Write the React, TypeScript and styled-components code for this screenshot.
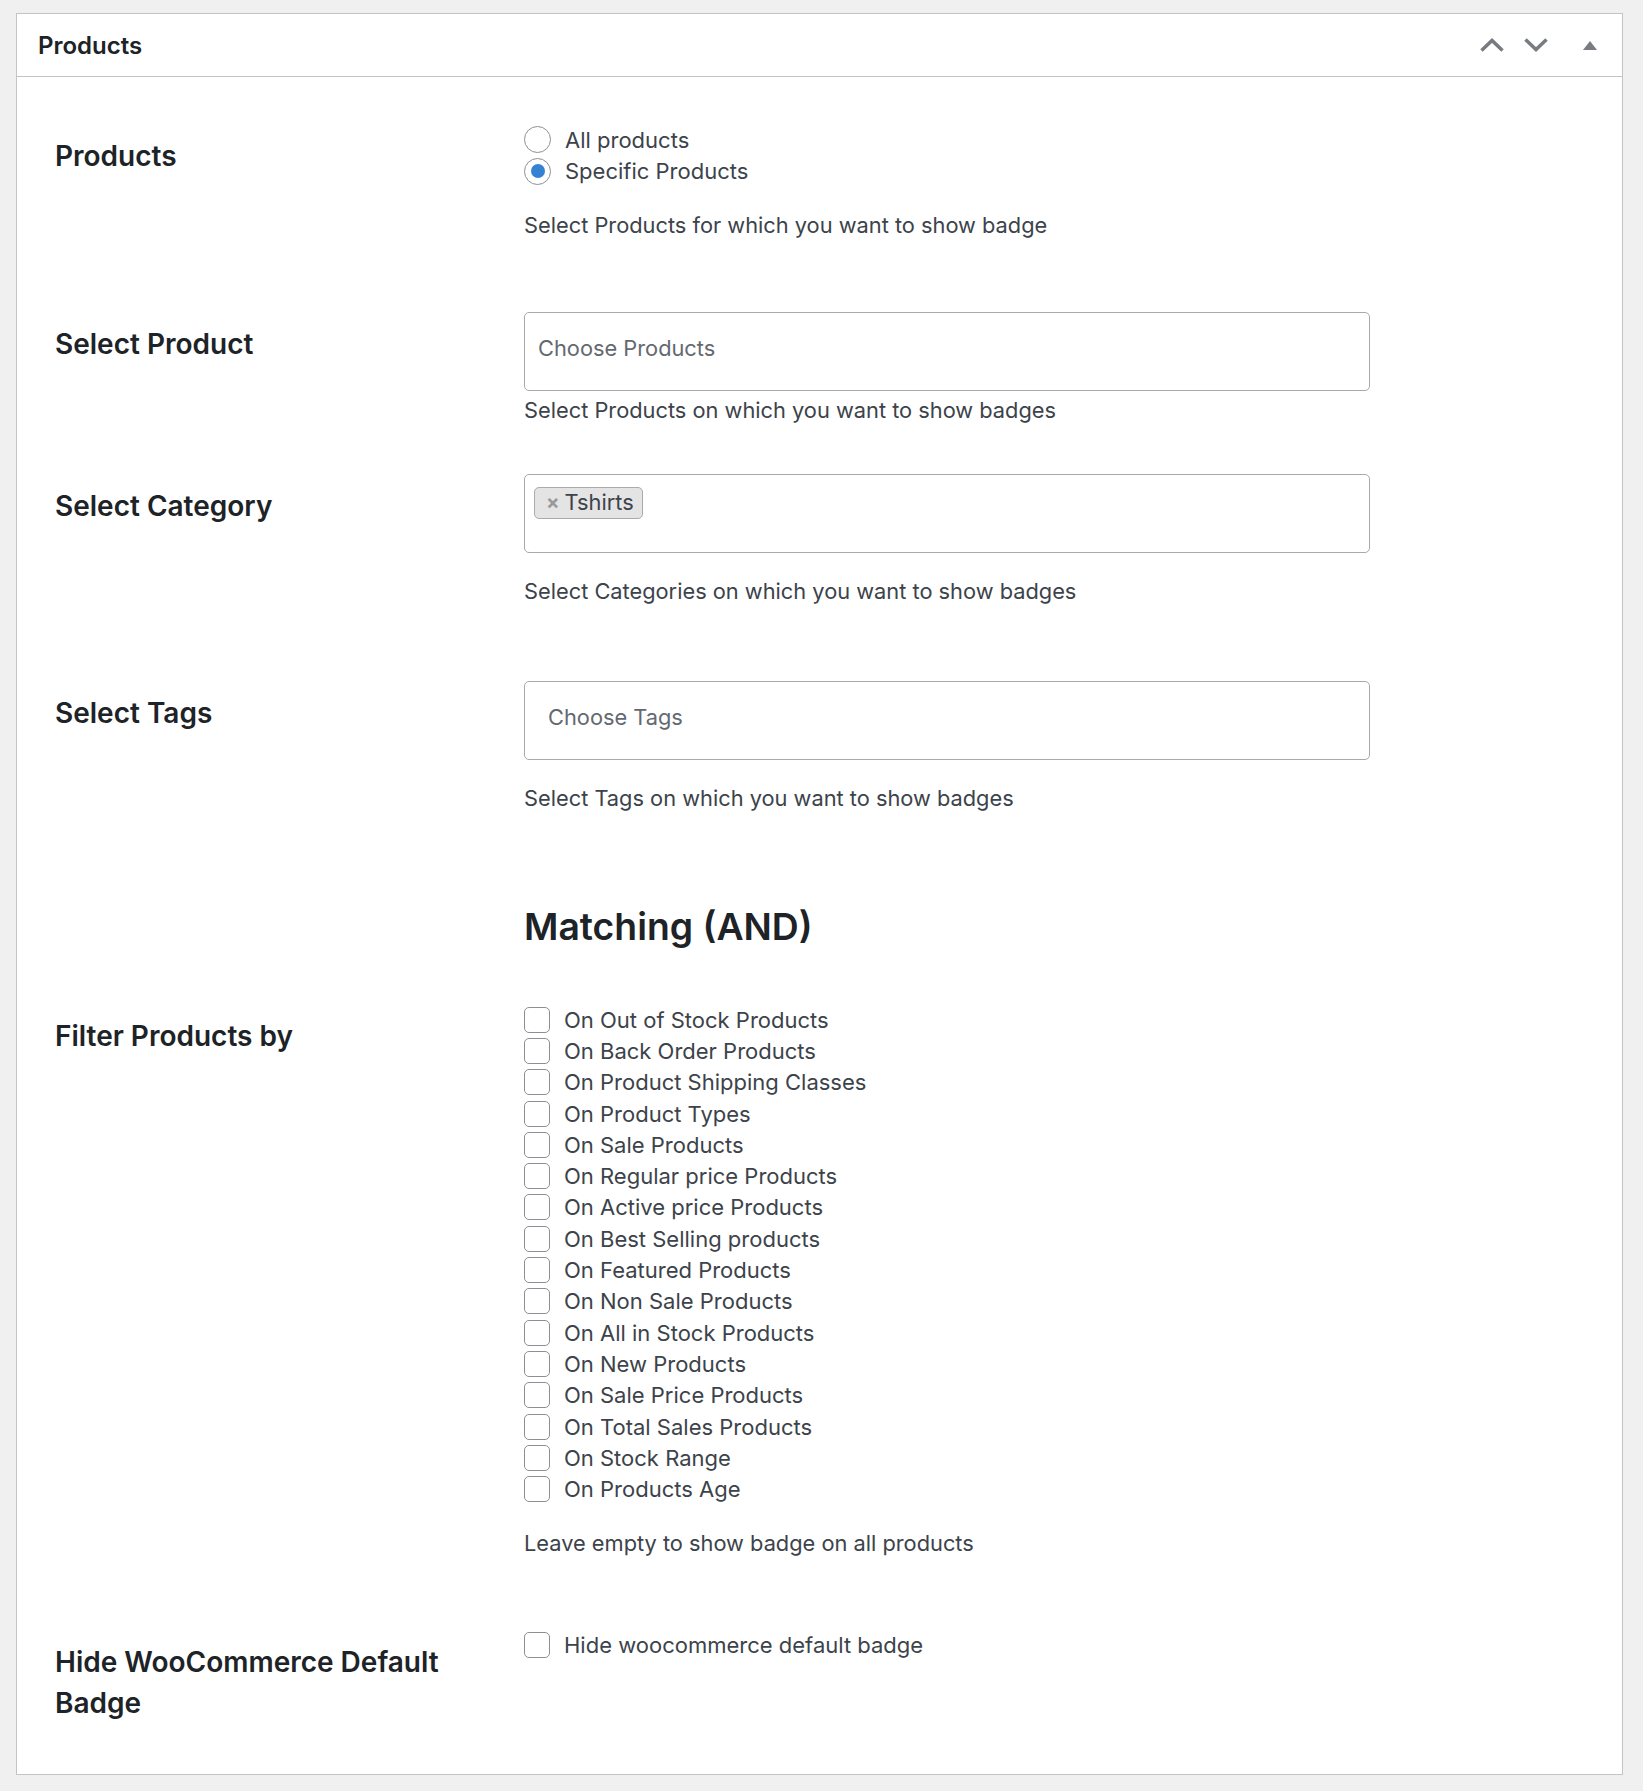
import styled, { createGlobalStyle } from "styled-components";

const GlobalStyle = createGlobalStyle`
  html, body {
    margin: 0;
    padding: 0;
    background: #f0f0f1;
  }
  body {
    font-family: Inter, "Noto Sans", sans-serif;
    color: #3c434a;
  }
`;

const Page = styled.div`
  padding: 13px 20px 17px 16px;
`;

const Panel = styled.div`
  background: #fff;
  border: 1px solid #c3c4c7;
`;

const PanelHeader = styled.div`
  height: 62px;
  display: flex;
  align-items: center;
  padding: 0 10px 0 21px;
  border-bottom: 1px solid #c3c4c7;
`;

const PanelTitle = styled.h2`
  flex: 1;
  margin: 0;
  font-size: 24px;
  font-weight: 600;
  color: #1d2327;
`;

const HeaderButton = styled.button<{ $gapBefore?: number }>`
  width: 44px;
  height: 44px;
  margin-left: ${(p) => p.$gapBefore ?? 0}px;
  padding: 0;
  border: 0;
  background: none;
  display: flex;
  align-items: center;
  justify-content: center;
  cursor: pointer;
`;

const PanelBody = styled.div`
  padding: 23px 0 14px 38px;
`;

const Row = styled.div`
  display: grid;
  grid-template-columns: 469px 1fr;
`;

const Label = styled.div`
  padding: 36px 40px 36px 0;
  font-size: 28px;
  line-height: 41px;
  font-weight: 600;
  color: #1d2327;
`;

const Field = styled.div`
  padding: 24px 0;
`;

const Help = styled.p<{ $top?: number; $bottom?: number }>`
  margin: ${(p) => p.$top ?? 23}px 0 ${(p) => p.$bottom ?? 23}px;
  font-size: 21.8px;
  line-height: 31px;
`;

const Option = styled.label<{ $h?: number }>`
  display: flex;
  align-items: center;
  gap: 14px;
  height: ${(p) => p.$h ?? 31.3}px;
  font-size: 22px;
  color: #3c434a;
`;

const RadioDot = styled.span<{ $checked?: boolean }>`
  width: 27px;
  height: 27px;
  box-sizing: border-box;
  border-radius: 50%;
  border: 1.5px solid #8c8f94;
  display: flex;
  align-items: center;
  justify-content: center;
  flex-shrink: 0;

  &::after {
    content: "";
    width: 14px;
    height: 14px;
    border-radius: 50%;
    background: #3582d4;
    display: ${(p) => (p.$checked ? "block" : "none")};
  }
`;

const CheckBox = styled.span`
  width: 26px;
  height: 26px;
  box-sizing: border-box;
  border-radius: 5px;
  border: 1.5px solid #8c8f94;
  background: #fff;
  flex-shrink: 0;
`;

const SelectBox = styled.div<{ $padLeft?: number }>`
  width: 846px;
  height: 79px;
  box-sizing: border-box;
  border: 1.5px solid #a7aaad;
  border-radius: 5px;
  padding: 11px 9px 0 ${(p) => p.$padLeft ?? 9}px;
  font-size: 21.8px;
  line-height: 31px;
`;

const Placeholder = styled.span`
  display: block;
  padding-top: 9px;
  color: #646970;
`;

const Chip = styled.span`
  display: inline-flex;
  align-items: center;
  gap: 5px;
  height: 32px;
  box-sizing: border-box;
  padding: 0 8px 0 11px;
  background: #e4e4e4;
  border: 1.5px solid #aaa;
  border-radius: 5px;
  color: #3c434a;
`;

const ChipRemove = styled.span`
  color: #999;
  font-weight: 700;
  font-size: 20px;
`;

const Heading = styled.h2`
  margin: 16px 0 3px;
  font-size: 37.3px;
  line-height: 52px;
  font-weight: 600;
  color: #1d2327;
`;

const Chevron = ({ up }: { up?: boolean }) => (
  <svg width="24" height="14" viewBox="0 0 24 14">
    <polyline
      points={up ? "1.5,12.5 12,2.5 22.5,12.5" : "1.5,1.5 12,11.5 22.5,1.5"}
      fill="none"
      stroke="#787c82"
      strokeWidth="3.5"
    />
  </svg>
);

const Caret = () => (
  <svg width="14" height="9" viewBox="0 0 14 9">
    <polygon points="7,0 14,9 0,9" fill="#787c82" />
  </svg>
);

const filters = [
  "On Out of Stock Products",
  "On Back Order Products",
  "On Product Shipping Classes",
  "On Product Types",
  "On Sale Products",
  "On Regular price Products",
  "On Active price Products",
  "On Best Selling products",
  "On Featured Products",
  "On Non Sale Products",
  "On All in Stock Products",
  "On New Products",
  "On Sale Price Products",
  "On Total Sales Products",
  "On Stock Range",
  "On Products Age",
];

export default function App() {
  return (
    <Page>
      <GlobalStyle />
      <Panel>
        <PanelHeader>
          <PanelTitle>Products</PanelTitle>
          <HeaderButton aria-label="Move up">
            <Chevron up />
          </HeaderButton>
          <HeaderButton aria-label="Move down">
            <Chevron />
          </HeaderButton>
          <HeaderButton aria-label="Toggle panel" $gapBefore={10}>
            <Caret />
          </HeaderButton>
        </PanelHeader>

        <PanelBody>
          <Row>
            <Label>Products</Label>
            <Field>
              <Option $h={31.5}>
                <RadioDot />
                All products
              </Option>
              <Option $h={31.5}>
                <RadioDot $checked />
                Specific Products
              </Option>
              <Help>Select Products for which you want to show badge</Help>
            </Field>
          </Row>

          <Row>
            <Label>Select Product</Label>
            <Field>
              <SelectBox $padLeft={13}>
                <Placeholder>Choose Products</Placeholder>
              </SelectBox>
              <Help $top={4} $bottom={0}>
                Select Products on which you want to show badges
              </Help>
            </Field>
          </Row>

          <Row>
            <Label>Select Category</Label>
            <Field>
              <SelectBox>
                <Chip>
                  <ChipRemove>×</ChipRemove>
                  Tshirts
                </Chip>
              </SelectBox>
              <Help $bottom={26}>Select Categories on which you want to show badges</Help>
            </Field>
          </Row>

          <Row>
            <Label>Select Tags</Label>
            <Field>
              <SelectBox $padLeft={23}>
                <Placeholder>Choose Tags</Placeholder>
              </SelectBox>
              <Help>Select Tags on which you want to show badges</Help>
            </Field>
          </Row>

          <Row>
            <div />
            <Field>
              <Heading>Matching (AND)</Heading>
            </Field>
          </Row>

          <Row>
            <Label>Filter Products by</Label>
            <Field>
              {filters.map((f) => (
                <Option key={f}>
                  <CheckBox />
                  {f}
                </Option>
              ))}
              <Help>Leave empty to show badge on all products</Help>
            </Field>
          </Row>

          <Row>
            <Label>Hide WooCommerce Default Badge</Label>
            <Field>
              <Option $h={31}>
                <CheckBox />
                Hide woocommerce default badge
              </Option>
            </Field>
          </Row>
        </PanelBody>
      </Panel>
    </Page>
  );
}
